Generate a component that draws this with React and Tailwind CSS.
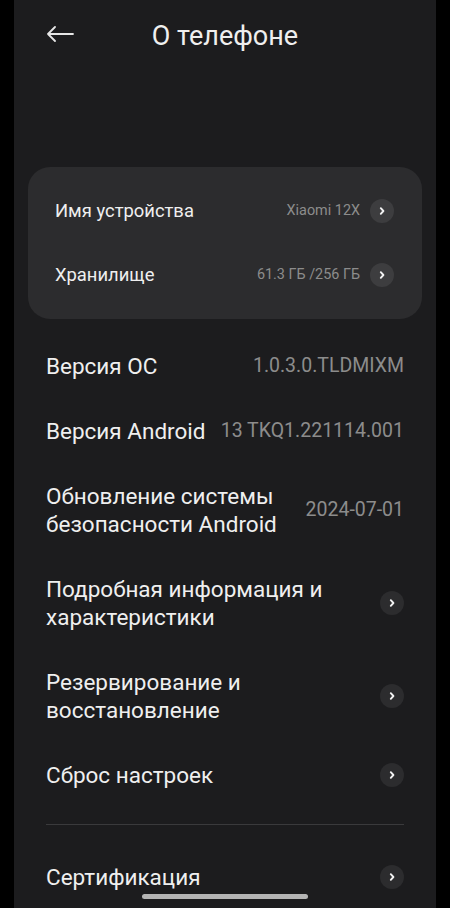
import React from "react";

const Chevron = ({ bg = "bg-[#3d3d3f]" }) => (
  <div className={`w-[24px] h-[24px] rounded-full ${bg} flex items-center justify-center shrink-0`}>
    <svg width="10" height="10" viewBox="0 0 10 10">
      <path d="M3.8 2.2 L6.4 5 L3.8 7.8" fill="none" stroke="#f2f2f2" strokeWidth="1.9" strokeLinecap="round" strokeLinejoin="round" />
    </svg>
  </div>
);

const InfoRow = ({ label, value, chevron }) => (
  <div className="flex items-center justify-between px-[32px] py-[18.5px]">
    <div className="text-[22.5px] leading-[28px] text-[#efefef] pr-3">{label}</div>
    {value && <div className="text-[19.5px] leading-[28px] text-[#8c8c8c] whitespace-nowrap">{value}</div>}
    {chevron && <Chevron bg="bg-[#2c2c2e]" />}
  </div>
);

export default function App() {
  return (
    <div className="w-[450px] h-[908px] bg-black flex overflow-hidden" style={{ fontFamily: "Roboto, 'Noto Sans', sans-serif" }}>
      <div className="ml-[14px] w-[422px] h-full bg-[#1c1c1e] relative flex flex-col overflow-hidden">
        <div className="h-[72px] shrink-0 relative flex items-center justify-center">
          <svg className="absolute left-[33px] top-[26px]" width="27" height="16" viewBox="0 0 27 16">
            <path d="M1 8 H26 M8 1 L1 8 L8 15" fill="none" stroke="#e6e6e6" strokeWidth="1.8" strokeLinecap="round" strokeLinejoin="round" />
          </svg>
          <div className="text-[27px] text-[#efefef] leading-none">О телефоне</div>
        </div>
        <div className="shrink-0 mt-[95px] mx-[14px] rounded-[22px] bg-[#2c2c2e] py-[12px]">
          <div className="h-[64px] flex items-center pl-[27px] pr-[28px]">
            <div className="flex-1 text-[18.4px] text-[#efefef]">Имя устройства</div>
            <div className="text-[14.4px] text-[#8c8c8c] mr-[10px]">Xiaomi 12X</div>
            <Chevron />
          </div>
          <div className="h-[64px] flex items-center pl-[27px] pr-[28px]">
            <div className="flex-1 text-[18.4px] text-[#efefef]">Хранилище</div>
            <div className="text-[14.4px] text-[#8c8c8c] mr-[10px]">61.3 ГБ /256 ГБ</div>
            <Chevron />
          </div>
        </div>
        <div className="shrink-0 mt-[14px]">
          <InfoRow label="Версия ОС" value="1.0.3.0.TLDMIXM" />
          <InfoRow label="Версия Android" value="13 TKQ1.221114.001" />
          <InfoRow label={<>Обновление системы<br />безопасности Android</>} value="2024-07-01" />
          <InfoRow label={<>Подробная информация и<br />характеристики</>} chevron />
          <InfoRow label={<>Резервирование и<br />восстановление</>} chevron />
          <InfoRow label="Сброс настроек" chevron />
          <div className="mx-[32px] mt-[17px] mb-[19px] h-px bg-[#3a3a3c]" />
          <InfoRow label="Сертификация" chevron />
        </div>
        <div className="absolute left-[128px] top-[894px] w-[166px] h-[5px] rounded-full bg-[#b4b4b4]" />
      </div>
    </div>
  );
}
